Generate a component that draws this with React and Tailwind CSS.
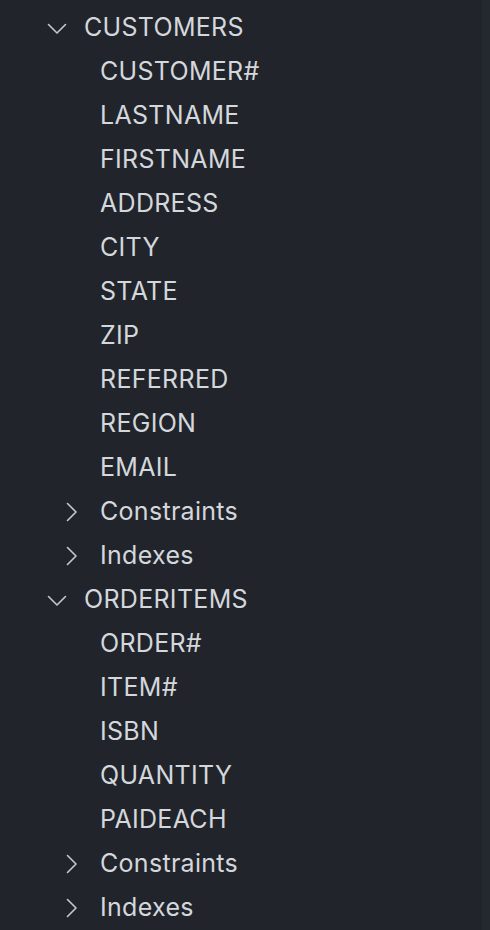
import { useState } from 'react'

const TABLES = [
  {
    name: 'CUSTOMERS',
    columns: ['CUSTOMER#', 'LASTNAME', 'FIRSTNAME', 'ADDRESS', 'CITY', 'STATE', 'ZIP', 'REFERRED', 'REGION', 'EMAIL'],
  },
  {
    name: 'ORDERITEMS',
    columns: ['ORDER#', 'ITEM#', 'ISBN', 'QUANTITY', 'PAIDEACH'],
  },
]

function ChevronDown() {
  return (
    <svg width="20" height="12" viewBox="0 0 20 12" fill="none" className="text-[#c5c8ce]">
      <path d="M1.5 1.5 L10 10 L18.5 1.5" stroke="currentColor" strokeWidth="1.6" strokeLinecap="round" strokeLinejoin="round" />
    </svg>
  )
}

function ChevronRight() {
  return (
    <svg width="12" height="20" viewBox="0 0 12 20" fill="none" className="text-[#c5c8ce]">
      <path d="M1.5 1.5 L10 10 L1.5 18.5" stroke="currentColor" strokeWidth="1.6" strokeLinecap="round" strokeLinejoin="round" />
    </svg>
  )
}

function Row({ children }) {
  return <div className="h-[44px] flex items-center whitespace-nowrap">{children}</div>
}

export default function App() {
  const [open] = useState({ CUSTOMERS: true, ORDERITEMS: true })

  return (
    <div
      className="w-[490px] h-[930px] bg-[#21252b] flex overflow-hidden text-[#d4d7dc] text-[25px] tracking-[0.3px]"
      style={{ fontFamily: 'Inter, "Noto Sans", sans-serif' }}
    >
      <div className="flex-1 pt-[6px]">
        {TABLES.map((t) => (
          <div key={t.name}>
            <Row>
              <span className="w-[84px] flex justify-end pr-[17px] pt-[1px]">
                <ChevronDown />
              </span>
              <span>{t.name}</span>
            </Row>
            {open[t.name] &&
              t.columns.map((c) => (
                <Row key={c}>
                  <span className="pl-[100px]">{c}</span>
                </Row>
              ))}
            {['Constraints', 'Indexes'].map((g) => (
              <Row key={g}>
                <span className="w-[100px] flex pl-[66px] -mt-[1px]">
                  <ChevronRight />
                </span>
                <span>{g}</span>
              </Row>
            ))}
          </div>
        ))}
      </div>
      <div className="w-[8px] bg-[#24282f]" />
    </div>
  )
}
